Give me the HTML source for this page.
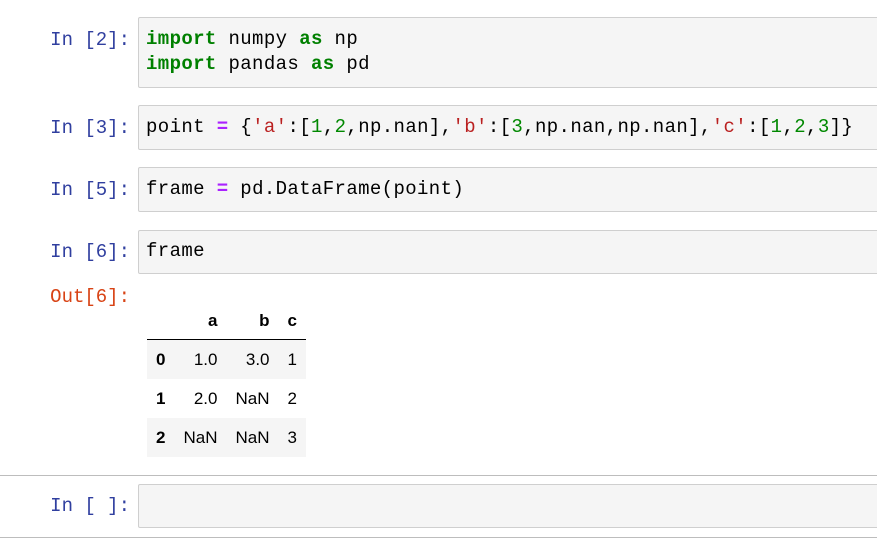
<!DOCTYPE html>
<html><head><style>
body{margin:0;width:877px;height:551px;background:#fff;position:relative;overflow:hidden;font-family:"Liberation Mono",monospace;}
.p{position:absolute;left:0;width:130px;text-align:right;font-size:19px;color:#303f9f;white-space:pre;}
.box{position:absolute;left:138px;width:760px;background:#f5f5f5;border:1px solid #cfcfcf;border-radius:2px;box-sizing:border-box;}
.code{position:absolute;left:146px;font-size:19px;letter-spacing:0.38px;line-height:25px;white-space:pre;color:#000;}
.k{color:#008000;font-weight:bold}.o{color:#aa22ff;font-weight:bold}.s{color:#ba2121}.n{color:#080}
table{position:absolute;left:147px;top:303px;border-collapse:collapse;font-family:"Liberation Sans",sans-serif;font-size:17px;}
td,th{text-align:right;padding:0 9px;height:39px;vertical-align:middle}
thead th{height:36px;border-bottom:1px solid #000}
tbody tr:nth-child(odd){background:#f5f5f5}
.hr{position:absolute;left:0;width:877px;height:1px;background:#bdbdbd}
</style></head><body>
<div class="p" style="top:29px">In [2]:</div>
<div class="box" style="top:17px;height:71px"></div>
<div class="code" style="top:27px"><span class="k">import</span> numpy <span class="k">as</span> np
<span class="k">import</span> pandas <span class="k">as</span> pd</div>

<div class="p" style="top:117px">In [3]:</div>
<div class="box" style="top:105px;height:45px"></div>
<div class="code" style="top:115px">point <span class="o">=</span> {<span class="s">'a'</span>:[<span class="n">1</span>,<span class="n">2</span>,np.nan],<span class="s">'b'</span>:[<span class="n">3</span>,np.nan,np.nan],<span class="s">'c'</span>:[<span class="n">1</span>,<span class="n">2</span>,<span class="n">3</span>]}</div>

<div class="p" style="top:179px">In [5]:</div>
<div class="box" style="top:167px;height:45px"></div>
<div class="code" style="top:177px">frame <span class="o">=</span> pd.DataFrame(point)</div>

<div class="p" style="top:241px">In [6]:</div>
<div class="box" style="top:230px;height:44px"></div>
<div class="code" style="top:239px">frame</div>

<div class="p" style="top:286px;color:#d84315">Out[6]:</div>
<table>
<thead><tr><th></th><th>a</th><th>b</th><th>c</th></tr></thead>
<tbody>
<tr><th>0</th><td>1.0</td><td>3.0</td><td>1</td></tr>
<tr><th>1</th><td>2.0</td><td>NaN</td><td>2</td></tr>
<tr><th>2</th><td>NaN</td><td>NaN</td><td>3</td></tr>
</tbody></table>

<div class="hr" style="top:475px"></div>
<div class="p" style="top:495px">In [ ]:</div>
<div class="box" style="top:484px;height:44px"></div>
<div class="hr" style="top:537px"></div>
</body></html>
